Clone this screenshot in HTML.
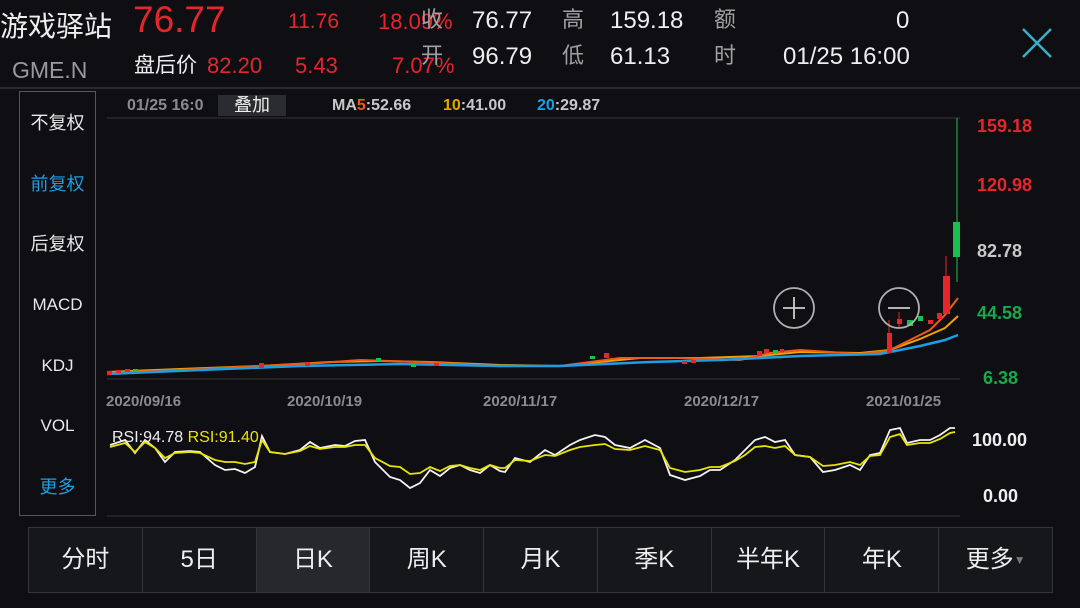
<!DOCTYPE html>
<html><head><meta charset="utf-8"><style>
*{margin:0;padding:0;box-sizing:border-box}
body{width:1080px;height:608px;background:#0f0f13;overflow:hidden;position:relative;font-family:"Liberation Sans","Noto Sans CJK SC",sans-serif;color:#e8e8e8}
.a{position:absolute;white-space:nowrap;line-height:1}
.r{color:#e5262d}.w{color:#eeeeee}.g{color:#a0a0a0}
.lp{position:absolute;left:19px;top:91px;width:77px;height:425px;border:1px solid #55565a}
.lp div{position:absolute;left:0;width:75px;text-align:center;font-size:18px;line-height:1;color:#e8e8e8}
.tabs{position:absolute;left:28px;top:527px;width:1025px;height:66px;border:1px solid #34353a;display:flex;background:#16171a}
.tabs div{flex:1;border-right:1px solid #34353a;text-align:center;line-height:64px;font-size:24px;color:#eee}
.tabs div:last-child{border-right:none}
.ax{position:absolute;font-weight:bold;font-size:18px;line-height:1;white-space:nowrap}
.dt{position:absolute;top:394px;font-weight:bold;font-size:15px;color:#8a8b90;line-height:1}
</style></head><body>
<div class="a w" style="left:0;top:13px;font-size:28px">游戏驿站</div>
<div class="a r" style="left:133px;top:1px;font-size:37px">76.77</div>
<div class="a r" style="left:288px;top:11px;font-size:21px">11.76</div>
<div class="a r" style="left:378px;top:11px;font-size:22px">18.09%</div>
<div class="a g" style="left:421px;top:9px;font-size:22px">收</div>
<div class="a w" style="left:472px;top:9px;font-size:24px">76.77</div>
<div class="a g" style="left:562px;top:9px;font-size:22px">高</div>
<div class="a w" style="left:610px;top:9px;font-size:24px">159.18</div>
<div class="a g" style="left:714px;top:9px;font-size:22px">额</div>
<div class="a w" style="left:896px;top:9px;font-size:24px">0</div>
<div class="a g" style="left:12px;top:59px;font-size:23px;color:#9a9a9e">GME.N</div>
<div class="a w" style="left:134px;top:55px;font-size:21px">盘后价</div>
<div class="a r" style="left:207px;top:55px;font-size:22px">82.20</div>
<div class="a r" style="left:295px;top:55px;font-size:22px">5.43</div>
<div class="a r" style="left:392px;top:55px;font-size:22px">7.07%</div>
<div class="a g" style="left:421px;top:45px;font-size:22px">开</div>
<div class="a w" style="left:472px;top:45px;font-size:24px">96.79</div>
<div class="a g" style="left:562px;top:45px;font-size:22px">低</div>
<div class="a w" style="left:610px;top:45px;font-size:24px">61.13</div>
<div class="a g" style="left:714px;top:45px;font-size:22px">时</div>
<div class="a w" style="left:783px;top:45px;font-size:24px">01/25 16:00</div>
<svg class="a" style="left:1020px;top:26px" width="34" height="34"><path d="M3 3L31 31M31 3L3 31" stroke="#3aaec6" stroke-width="2.5"/></svg>
<div class="a" style="left:0;top:87px;width:1080px;height:2px;background:#2a2a2e"></div>

<div class="lp">
<div style="top:22px">不复权</div>
<div style="top:83px;color:#1e9ee0">前复权</div>
<div style="top:143px">后复权</div>
<div style="top:204px;font-size:17px">MACD</div>
<div style="top:265px;font-size:17px">KDJ</div>
<div style="top:325px;font-size:17px">VOL</div>
<div style="top:386px;color:#1e9ee0">更多</div>
</div>

<div class="a" style="left:127px;top:98px;font-size:16px;font-weight:bold;color:#8a8b90">01/25 16:0</div>
<div class="a" style="left:218px;top:95px;width:68px;height:21px;background:#2b2c31;font-size:18px;color:#eee;text-align:center;line-height:21px">叠加</div>
<div class="a" style="left:332px;top:98px;font-size:16px;font-weight:bold;color:#c8c8c8">MA<span style="color:#f05a14">5</span>:52.66</div>
<div class="a" style="left:443px;top:98px;font-size:16px;font-weight:bold;color:#c8c8c8"><span style="color:#e0a800">10</span>:41.00</div>
<div class="a" style="left:537px;top:98px;font-size:16px;font-weight:bold;color:#c8c8c8"><span style="color:#1e9ee0">20</span>:29.87</div>

<svg class="a" style="left:0;top:0" width="1080" height="608">
<line x1="107" y1="118" x2="960" y2="118" stroke="#2a2a2e" stroke-width="1.5"/>
<line x1="107" y1="379" x2="960" y2="379" stroke="#2a2a2e" stroke-width="1.5"/>
<line x1="107" y1="516" x2="960" y2="516" stroke="#2a2a2e" stroke-width="1.5"/>
<polyline fill="none" stroke="#f0a000" stroke-width="2" points="107,372 180,369 260,366 330,362 380,361 430,362 500,365 560,366 640,358 700,358 760,356 800,352 860,353 890,350 920,339 945,328 958,316"/>
<polyline fill="none" stroke="#f05a14" stroke-width="2" points="107,373 180,370 260,366 320,363 360,360 420,362 500,366 560,366 620,358 680,358 740,360 770,353 800,350 860,354 888,351 910,340 930,330 945,315 958,298"/>
<polyline fill="none" stroke="#1e9ee0" stroke-width="2.5" points="107,374 200,370 300,366 400,364 500,366 560,366 650,362 720,360 800,356 880,354 900,350 920,346 945,340 958,335"/>
<g fill="#e5262d"><rect x="107" y="371" width="5" height="4"/><rect x="116" y="370" width="5" height="3"/><rect x="125" y="369" width="5" height="3"/><rect x="259" y="363" width="5" height="5"/><rect x="305" y="362" width="5" height="4"/><rect x="434" y="363" width="5" height="3"/><rect x="604" y="353" width="5" height="5"/><rect x="682" y="361" width="5" height="3"/><rect x="691" y="360" width="5" height="3"/><rect x="757" y="351" width="5" height="5"/><rect x="764" y="349" width="5" height="4"/><rect x="780" y="349" width="4" height="3"/><rect x="887" y="333" width="5" height="20"/><rect x="897" y="319" width="5" height="5"/><rect x="928" y="320" width="5" height="4"/><rect x="937" y="313" width="5" height="6"/><rect x="943" y="276" width="7" height="38"/></g>
<g stroke="#e5262d" stroke-width="1"><line x1="889" y1="320" x2="889" y2="353"/><line x1="899" y1="312" x2="899" y2="327"/><line x1="946" y1="256" x2="946" y2="314"/></g>
<g fill="#19c050"><rect x="133" y="369" width="5" height="3"/><rect x="376" y="358" width="5" height="3"/><rect x="411" y="364" width="5" height="3"/><rect x="590" y="356" width="5" height="3"/><rect x="773" y="350" width="5" height="3"/><rect x="907" y="320" width="6" height="6"/><rect x="918" y="316" width="5" height="5"/><rect x="953" y="222" width="7" height="35"/></g>
<line x1="957" y1="118" x2="957" y2="282" stroke="#19c050" stroke-width="1"/>
<circle cx="794" cy="308" r="20" fill="none" stroke="#b0b0b0" stroke-width="1.8"/>
<path d="M783 308H805M794 297V319" stroke="#ccc" stroke-width="1.8"/>
<circle cx="899" cy="308" r="20" fill="none" stroke="#b0b0b0" stroke-width="1.8"/>
<path d="M888 308H910" stroke="#ccc" stroke-width="1.8"/>
<polyline fill="none" stroke="#f2f2f2" stroke-width="1.8" points="110,445 125,440 135,453 145,440 155,448 165,462 175,452 190,451 200,452 215,465 225,470 235,469 245,473 255,467 262,436 270,452 285,454 300,450 310,442 320,448 335,445 345,446 355,441 365,440 375,462 390,477 400,480 410,488 420,483 430,470 440,476 450,468 460,465 470,470 480,473 490,465 500,471 505,472 515,458 530,462 545,450 555,455 570,445 580,440 595,435 605,437 615,445 630,448 645,440 660,448 670,475 685,480 700,476 710,470 720,470 735,460 745,450 755,440 765,437 775,442 785,440 795,455 810,457 823,472 835,470 850,465 860,470 870,455 880,453 890,430 900,428 907,443 920,440 930,440 940,435 950,428 955,428"/>
<polyline fill="none" stroke="#e8e400" stroke-width="1.8" points="110,447 125,443 135,452 145,442 155,448 165,458 175,453 190,452 200,453 215,460 225,462 235,462 245,464 255,462 262,440 270,452 285,454 300,451 310,446 320,449 335,447 345,447 355,445 365,445 375,458 390,466 400,467 410,474 420,473 430,467 440,471 450,466 460,465 470,468 480,470 490,465 500,468 505,468 515,460 530,461 545,455 555,456 570,450 580,447 595,445 605,444 615,449 630,450 645,446 660,450 670,468 685,472 700,470 710,467 720,467 735,461 745,455 755,447 765,446 775,448 785,446 795,455 810,457 823,466 835,465 850,462 860,465 870,456 880,455 890,437 900,434 907,445 920,443 930,443 940,439 950,433 955,432"/>
</svg>
<div class="a" style="left:112px;top:430px;font-size:16px;color:#eee">RSI:94.78 <span style="color:#e8e400">RSI:91.40</span></div>

<div class="ax" style="left:977px;top:117px;color:#e5262d">159.18</div>
<div class="ax" style="left:977px;top:176px;color:#e5262d">120.98</div>
<div class="ax" style="left:977px;top:242px;color:#c8c8c8">82.78</div>
<div class="ax" style="left:977px;top:304px;color:#19a84a">44.58</div>
<div class="ax" style="left:983px;top:369px;color:#19a84a">6.38</div>
<div class="ax" style="left:972px;top:431px;color:#eee">100.00</div>
<div class="ax" style="left:983px;top:487px;color:#eee">0.00</div>

<div class="dt" style="left:106px">2020/09/16</div>
<div class="dt" style="left:287px">2020/10/19</div>
<div class="dt" style="left:483px">2020/11/17</div>
<div class="dt" style="left:684px">2020/12/17</div>
<div class="dt" style="left:866px">2021/01/25</div>

<div class="tabs">
<div>分时</div><div>5日</div><div style="background:#26282d">日K</div><div>周K</div><div>月K</div><div>季K</div><div>半年K</div><div>年K</div><div>更多<span style="font-size:12px;color:#777;vertical-align:3px">▼</span></div>
</div>
</body></html>
